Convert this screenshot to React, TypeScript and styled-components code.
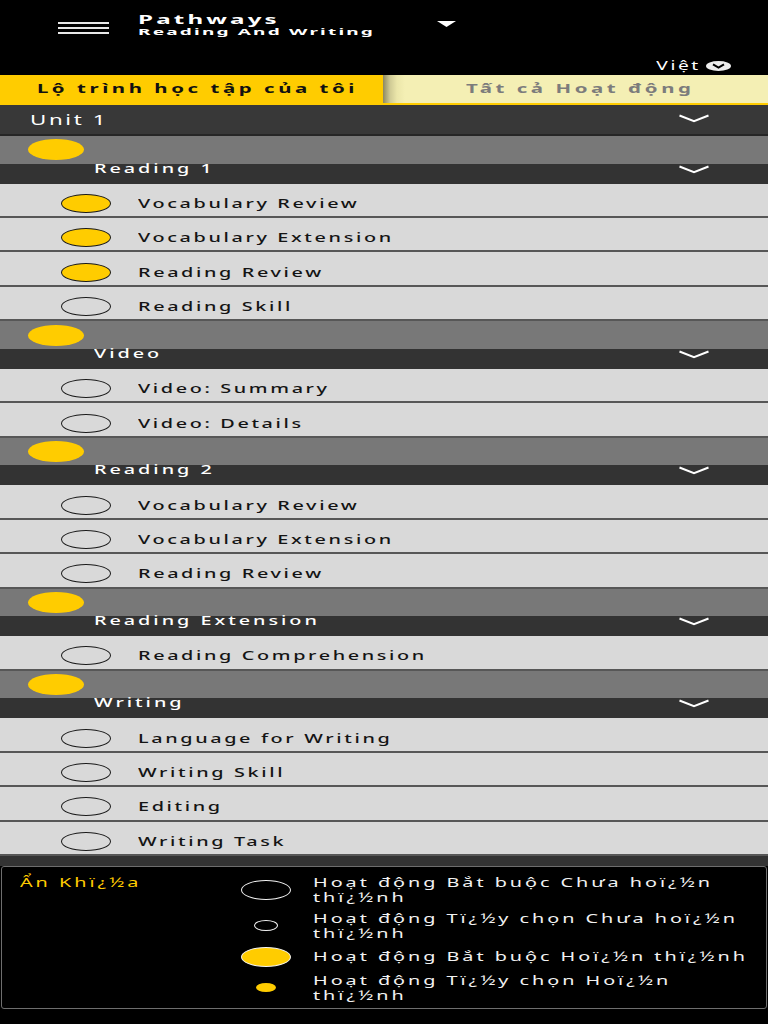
import React from 'react';
import styled, { createGlobalStyle, css } from 'styled-components';

const YELLOW = '#ffcc00';

const GlobalStyle = createGlobalStyle`
  html, body { margin: 0; padding: 0; background: #000; }
  body { font-family: "Noto Sans", "DejaVu Sans", sans-serif; }
  *, *::before, *::after { box-sizing: border-box; }
`;

const wide = (s: number, origin = 'left center') => css`
  display: inline-block;
  white-space: nowrap;
  transform: scaleX(${s});
  transform-origin: ${origin};
`;

const Page = styled.div`
  width: 768px;
  min-height: 1024px;
  background: #000;
  display: flex;
  flex-direction: column;
`;

/* ---------- Header ---------- */
const Header = styled.header`
  height: 75px;
  display: flex;
  flex-direction: column;
  background: #000;
`;

const TopBar = styled.div`
  display: flex;
  align-items: flex-start;
  padding: 14px 0 0 58px;
`;

const Hamburger = styled.div`
  width: 51px;
  display: flex;
  flex-direction: column;
  gap: 3px;
  margin-top: 8px;
`;

const HamburgerLine = styled.span`
  display: block;
  height: 2px;
  background: #e8e8e8;
`;

const TitleBlock = styled.div`
  width: 299px;
  margin-left: 29px;
  display: flex;
  flex-direction: column;
`;

const AppTitle = styled.span`
  font-weight: 700;
  font-size: 11.5px;
  line-height: 12px;
  letter-spacing: 1.5px;
  color: #fff;
  ${wide(2.1)}
`;

const AppSubtitle = styled.span`
  font-weight: 700;
  font-size: 9.5px;
  line-height: 11px;
  letter-spacing: 1.1px;
  color: #fff;
  ${wide(2)}
`;

const DropTriangle = styled.svg`
  margin-top: 7px;
  flex: none;
`;

const LangRow = styled.div`
  margin-top: auto;
  display: flex;
  justify-content: flex-end;
  align-items: center;
  gap: 5px;
  padding: 0 37px 2px 0;
`;

const LangLabel = styled.span`
  font-size: 12px;
  line-height: 14px;
  letter-spacing: 1.6px;
  color: #fff;
  ${wide(1.6, 'right center')}
`;

/* ---------- Tabs ---------- */
const Tabs = styled.nav`
  display: grid;
  grid-template-columns: 383px 1fr;
  height: 30px;
  border-bottom: 2px solid ${YELLOW};
`;

const Tab = styled.div<{ $active?: boolean }>`
  display: flex;
  align-items: center;
  justify-content: center;
  padding-left: ${p => (p.$active ? 12 : 10)}px;
  background: ${p =>
    p.$active
      ? YELLOW
      : 'linear-gradient(90deg, #8c8862 0px, #cfca95 7px, #ebe6aa 14px, #f4efb4 22px)'};
`;

const TabLabel = styled.span<{ $active?: boolean }>`
  font-weight: 700;
  font-size: 12px;
  line-height: 14px;
  letter-spacing: 2.1px;
  color: ${p => (p.$active ? '#111' : '#7c7c7c')};
  ${wide(1.7, 'center center')}
`;

/* ---------- Unit / Sections ---------- */
const UnitRow = styled.div`
  height: 31px;
  background: #383838;
  border-bottom: 2px solid #262626;
  display: flex;
  align-items: center;
  justify-content: space-between;
  padding: 0 58px 0 30px;
`;

const UnitTitle = styled.span`
  font-size: 13.5px;
  line-height: 14px;
  letter-spacing: 1.6px;
  color: #fff;
  margin-top: 0;
  ${wide(1.65)}
`;

const Chevron = styled.svg<{ $offset?: number }>`
  flex: none;
  margin-top: ${p => p.$offset ?? 0}px;
`;

const SectionBand = styled.div`
  height: 27.7px;
  background: #787878;
  display: flex;
  align-items: center;
  padding-left: 28px;
`;

const SectionBar = styled.div`
  height: 20px;
  background: #333;
  display: flex;
  justify-content: space-between;
  align-items: flex-start;
  padding: 0 58px 0 94px;
`;

const SectionTitle = styled.span`
  font-size: 12px;
  font-weight: 500;
  line-height: 12px;
  letter-spacing: 1.8px;
  color: #fff;
  margin-top: -1px;
  ${wide(1.65)}
`;

const ItemRow = styled.div`
  height: 34.4px;
  background: #d9d9d9;
  border-bottom: 2px solid #575757;
  display: flex;
  align-items: center;
  gap: 27px;
  padding: 7px 0 0 61px;
`;

const ItemLabel = styled.span`
  font-size: 12px;
  font-weight: 500;
  line-height: 14px;
  letter-spacing: 1.6px;
  color: #141414;
  margin-top: 1px;
  ${wide(1.65)}
`;

const Dot = styled.span<{ $w: number; $h: number; $fill?: string; $stroke?: string; $bw?: number }>`
  flex: none;
  display: block;
  width: ${p => p.$w}px;
  height: ${p => p.$h}px;
  border-radius: 50%;
  background: ${p => p.$fill ?? 'transparent'};
  border: ${p => (p.$stroke ? `${p.$bw ?? 1}px solid ${p.$stroke}` : 'none')};
`;

const ListEnd = styled.div`
  height: 10px;
  background: #333;
`;

/* ---------- Legend ---------- */
const Legend = styled.section`
  margin: 0 1px;
  border: 1px solid #6e6e6e;
  border-radius: 3px;
  background: #000;
  display: flex;
  padding: 8px 0 5px 18px;
`;

const HideLabel = styled.span`
  width: 221px;
  flex: none;
  color: ${YELLOW};
  font-size: 12px;
  line-height: 15px;
  letter-spacing: 1.8px;
  align-self: flex-start;
  & > span {
    ${wide(1.65)}
  }
`;

const LegendList = styled.div`
  display: flex;
  flex-direction: column;
  gap: 6px;
`;

const LegendRow = styled.div`
  display: flex;
  align-items: center;
`;

const LegendIcon = styled.div`
  width: 50px;
  flex: none;
  display: flex;
  justify-content: center;
  align-items: center;
`;

const LegendText = styled.span`
  margin-left: 22px;
  color: #f2f2f2;
  font-size: 12px;
  line-height: 15px;
  letter-spacing: 1.8px;
  ${wide(1.65, 'left top')}
`;

/* ---------- Icons ---------- */
const ChevronIcon: React.FC<{ offset?: number }> = ({ offset }) => (
  <Chevron $offset={offset} width="32" height="9" viewBox="0 0 32 9">
    <polyline points="1.5,1.5 16,7.2 30.5,1.5" fill="none" stroke="#fff" strokeWidth="2" />
  </Chevron>
);

type Item = [string, boolean];
const sections: { title: string; items: Item[] }[] = [
  {
    title: 'Reading 1',
    items: [
      ['Vocabulary Review', true],
      ['Vocabulary Extension', true],
      ['Reading Review', true],
      ['Reading Skill', false],
    ],
  },
  {
    title: 'Video',
    items: [
      ['Video: Summary', false],
      ['Video: Details', false],
    ],
  },
  {
    title: 'Reading 2',
    items: [
      ['Vocabulary Review', false],
      ['Vocabulary Extension', false],
      ['Reading Review', false],
    ],
  },
  { title: 'Reading Extension', items: [['Reading Comprehension', false]] },
  {
    title: 'Writing',
    items: [
      ['Language for Writing', false],
      ['Writing Skill', false],
      ['Editing', false],
      ['Writing Task', false],
    ],
  },
];

export default function App() {
  return (
    <Page>
      <GlobalStyle />
      <Header>
        <TopBar>
          <Hamburger>
            <HamburgerLine />
            <HamburgerLine />
            <HamburgerLine />
          </Hamburger>
          <TitleBlock>
            <AppTitle>Pathways</AppTitle>
            <AppSubtitle>Reading And Writing</AppSubtitle>
          </TitleBlock>
          <DropTriangle width="19" height="6" viewBox="0 0 19 6">
            <polygon points="0,0 19,0 9.5,6" fill="#fff" />
          </DropTriangle>
        </TopBar>
        <LangRow>
          <LangLabel>Việt</LangLabel>
          <svg width="25" height="10" viewBox="0 0 25 10">
            <ellipse cx="12.5" cy="5" rx="12.5" ry="5" fill="#eee" />
            <polyline points="7,3.3 12.5,6.6 18,3.3" fill="none" stroke="#000" strokeWidth="2" />
          </svg>
        </LangRow>
      </Header>

      <Tabs>
        <Tab $active>
          <TabLabel $active>Lộ trình học tập của tôi</TabLabel>
        </Tab>
        <Tab>
          <TabLabel>Tất cả Hoạt động</TabLabel>
        </Tab>
      </Tabs>

      <UnitRow>
        <UnitTitle>Unit 1</UnitTitle>
        <ChevronIcon offset={-3} />
      </UnitRow>

      {sections.map(sec => (
        <React.Fragment key={sec.title}>
          <SectionBand>
            <Dot $w={56} $h={21} $fill={YELLOW} />
          </SectionBand>
          <SectionBar>
            <SectionTitle>{sec.title}</SectionTitle>
            <ChevronIcon offset={1} />
          </SectionBar>
          {sec.items.map(([label, done], i) => (
            <ItemRow key={i}>
              <Dot $w={50} $h={19} $fill={done ? YELLOW : 'transparent'} $stroke="#1a1a1a" $bw={1.5} />
              <ItemLabel>{label}</ItemLabel>
            </ItemRow>
          ))}
        </React.Fragment>
      ))}

      <ListEnd />

      <Legend>
        <HideLabel>
          <span>Ẩn Khï¿½a</span>
        </HideLabel>
        <LegendList>
          <LegendRow>
            <LegendIcon>
              <Dot $w={50} $h={20} $stroke="#f2f2f2" $bw={1.5} />
            </LegendIcon>
            <LegendText>
              Hoạt động Bắt buộc Chưa hoï¿½n
              <br />
              thï¿½nh
            </LegendText>
          </LegendRow>
          <LegendRow>
            <LegendIcon>
              <Dot $w={24} $h={11} $stroke="#f2f2f2" $bw={1} />
            </LegendIcon>
            <LegendText>
              Hoạt động Tï¿½y chọn Chưa hoï¿½n
              <br />
              thï¿½nh
            </LegendText>
          </LegendRow>
          <LegendRow>
            <LegendIcon>
              <Dot $w={50} $h={20} $fill={YELLOW} $stroke="#f2f2f2" $bw={1} />
            </LegendIcon>
            <LegendText>Hoạt động Bắt buộc Hoï¿½n thï¿½nh</LegendText>
          </LegendRow>
          <LegendRow>
            <LegendIcon>
              <Dot $w={20} $h={9} $fill={YELLOW} />
            </LegendIcon>
            <LegendText>
              Hoạt động Tï¿½y chọn Hoï¿½n
              <br />
              thï¿½nh
            </LegendText>
          </LegendRow>
        </LegendList>
      </Legend>
    </Page>
  );
}
